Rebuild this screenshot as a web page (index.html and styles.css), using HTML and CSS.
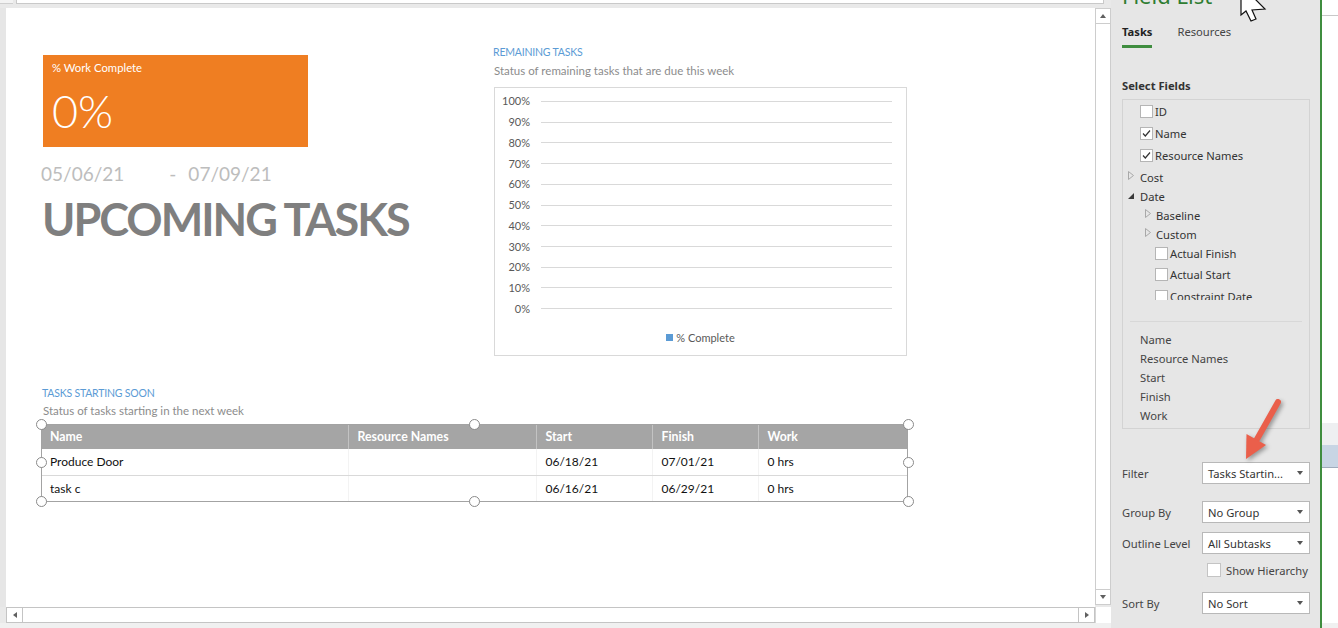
FILE: index.html
```html
<!DOCTYPE html>
<html>
<head>
<meta charset="utf-8">
<title>Upcoming Tasks</title>
<link rel="stylesheet" href="styles.css">
</head>
<body>
<div class="app">
  <div class="workspace">
    <div class="topstrip"><div class="tab-stub"></div><div class="formula"></div></div>
    <div class="mid">
      <div class="leftstrip"></div>
      <div class="canvas">
        <div class="report-top">
          <div class="left-col">
            <div class="kpi">
              <div class="kpi-label">% Work Complete</div>
              <div class="kpi-value">0%</div>
            </div>
            <div class="dates"><span>05/06/21</span><span class="dash">-</span><span class="date2">07/09/21</span></div>
            <h1 class="title">UPCOMING TASKS</h1>
          </div>
          <div class="right-col">
            <div class="sec-title">REMAINING TASKS</div>
            <div class="sec-sub">Status of remaining tasks that are due this week</div>
            <div class="chart">
              <div class="plot">
                <div class="grow"><span class="ylab">100%</span><span class="gline"></span></div>
                <div class="grow"><span class="ylab">90%</span><span class="gline"></span></div>
                <div class="grow"><span class="ylab">80%</span><span class="gline"></span></div>
                <div class="grow"><span class="ylab">70%</span><span class="gline"></span></div>
                <div class="grow"><span class="ylab">60%</span><span class="gline"></span></div>
                <div class="grow"><span class="ylab">50%</span><span class="gline"></span></div>
                <div class="grow"><span class="ylab">40%</span><span class="gline"></span></div>
                <div class="grow"><span class="ylab">30%</span><span class="gline"></span></div>
                <div class="grow"><span class="ylab">20%</span><span class="gline"></span></div>
                <div class="grow"><span class="ylab">10%</span><span class="gline"></span></div>
                <div class="grow"><span class="ylab">0%</span><span class="gline"></span></div>
              </div>
              <div class="legend"><span class="swatch"></span>% Complete</div>
            </div>
          </div>
        </div>
        <div class="report-bottom">
          <div class="sec-title t2">TASKS STARTING SOON</div>
          <div class="sec-sub s2">Status of tasks starting in the next week</div>
          <div class="table-wrap">
            <table class="tasks">
              <colgroup><col class="c1"><col class="c2"><col class="c3"><col class="c4"><col class="c5"></colgroup>
              <thead>
                <tr><th>Name</th><th>Resource Names</th><th>Start</th><th>Finish</th><th>Work</th></tr>
              </thead>
              <tbody>
                <tr><td>Produce Door</td><td></td><td>06/18/21</td><td>07/01/21</td><td>0 hrs</td></tr>
                <tr><td>task c</td><td></td><td>06/16/21</td><td>06/29/21</td><td>0 hrs</td></tr>
              </tbody>
            </table>
            <div class="frame"></div>
            <span class="handle h-tl"></span><span class="handle h-tc"></span><span class="handle h-tr"></span>
            <span class="handle h-ml"></span><span class="handle h-mr"></span>
            <span class="handle h-bl"></span><span class="handle h-bc"></span><span class="handle h-br"></span>
          </div>
        </div>
      </div>
      <div class="vscroll">
        <div class="sbtn up"><span class="tri tri-up"></span></div>
        <div class="strack"></div>
        <div class="sbtn down"><span class="tri tri-down"></span></div>
      </div>
    </div>
    <div class="hrow">
      <div class="hscroll">
        <div class="sbtn hleft"><span class="tri tri-left"></span></div>
        <div class="htrack"></div>
        <div class="sbtn hright"><span class="tri tri-right"></span></div>
      </div>
      <div class="corner"></div>
    </div>
    <div class="bottomgap"></div>
  </div>

  <aside class="panel">
    <div class="panel-title">Field List</div>
    <div class="tabs">
      <div class="tab active">Tasks</div>
      <div class="tab">Resources</div>
    </div>
    <div class="select-label">Select Fields</div>
    <div class="fieldbox">
      <div class="tree">
        <div class="row"><span class="cb l0"></span><span class="txt">ID</span></div>
        <div class="row"><span class="cb l0"><svg viewBox="0 0 11 11" width="11" height="11"><polyline points="2,5.5 4.3,8 9,2.5" fill="none" stroke="#333" stroke-width="1.2"/></svg></span><span class="txt">Name</span></div>
        <div class="row"><span class="cb l0"><svg viewBox="0 0 11 11" width="11" height="11"><polyline points="2,5.5 4.3,8 9,2.5" fill="none" stroke="#333" stroke-width="1.2"/></svg></span><span class="txt">Resource Names</span></div>
        <div class="row exp first-exp"><svg class="ex0" viewBox="0 0 6 9" width="6" height="9"><polygon points="0.5,0.5 5.5,4.5 0.5,8.5" fill="none" stroke="#a8a8a8" stroke-width="1"/></svg><span class="txt t-ex0">Cost</span></div>
        <div class="row exp"><svg class="ex0 open" viewBox="0 0 6 6" width="6" height="6"><polygon points="6,0 6,6 0,6" fill="#3a3a3a"/></svg><span class="txt t-ex0">Date</span></div>
        <div class="row exp"><svg class="ex1" viewBox="0 0 6 9" width="6" height="9"><polygon points="0.5,0.5 5.5,4.5 0.5,8.5" fill="none" stroke="#a8a8a8" stroke-width="1"/></svg><span class="txt t-ex1">Baseline</span></div>
        <div class="row exp"><svg class="ex1" viewBox="0 0 6 9" width="6" height="9"><polygon points="0.5,0.5 5.5,4.5 0.5,8.5" fill="none" stroke="#a8a8a8" stroke-width="1"/></svg><span class="txt t-ex1">Custom</span></div>
        <div class="row exp"><span class="cb l2"></span><span class="txt">Actual Finish</span></div>
        <div class="row"><span class="cb l2"></span><span class="txt">Actual Start</span></div>
        <div class="row"><span class="cb l2"></span><span class="txt">Constraint Date</span></div>
      </div>
      <div class="sep"></div>
      <div class="flist">
        <div>Name</div>
        <div>Resource Names</div>
        <div>Start</div>
        <div>Finish</div>
        <div>Work</div>
      </div>
    </div>
    <div class="form">
      <div class="frow"><span class="flabel">Filter</span><span class="dd">Tasks Startin...</span></div>
      <div class="frow group"><span class="flabel">Group By</span><span class="dd">No Group</span></div>
      <div class="frow outline"><span class="flabel">Outline Level</span><span class="dd">All Subtasks</span></div>
      <div class="crow"><span class="cb2"></span><span>Show Hierarchy</span></div>
      <div class="frow sort"><span class="flabel">Sort By</span><span class="dd">No Sort</span></div>
    </div>
  </aside>

  <div class="sliver">
    <div class="sl-top"></div>
    <div class="sl-fill"></div>
    <div class="sl-band1"></div>
    <div class="sl-band2"></div>
    <div class="sl-rest"></div>
    <div class="sl-bottom"></div>
  </div>

  <svg class="callout" width="50" height="72" viewBox="1234 394 50 72">
    <line x1="1278" y1="402" x2="1256" y2="441" stroke="#ea5f4b" stroke-width="6" stroke-linecap="round"/>
    <polygon points="1246,459 1246.5,434 1266,445" fill="#ea5f4b"/>
  </svg>

  <svg class="cursor" width="34" height="24" viewBox="0 0 34 24">
    <polygon points="5,-2 5,15 10,11 15,21 20,19 16,10 29,9 18,-2" fill="#fff" stroke="#111" stroke-width="1.2" stroke-linejoin="miter"/>
  </svg>
</div>
</body>
</html>
```

FILE: styles.css
```css
* { box-sizing: border-box; }

body {
  margin: 0;
  width: 1338px;
  height: 628px;
  overflow: hidden;
  background: #f0f0f0;
  font-family: Lato, "Liberation Sans", sans-serif;
}

.app {
  position: relative;
  display: flex;
  width: 1338px;
  height: 628px;
}

/* ---------- workspace ---------- */
.workspace {
  width: 1111px;
  display: flex;
  flex-direction: column;
  background: #e9e9e9;
}

.topstrip {
  height: 8px;
  display: flex;
  gap: 3px;
}
.tab-stub {
  width: 13px;
  height: 4px;
  background: #f3f3f3;
  border-bottom: 1px solid #cfcfcf;
}
.formula {
  width: 1088px;
  height: 4px;
  background: #fff;
  border: 1px solid #c9c9c9;
  border-top: 0;
}

.mid {
  display: flex;
  height: 599px;
}
.leftstrip {
  width: 6px;
  background: #e6e6e6;
}
.canvas {
  width: 1089px;
  background: #fff;
  overflow: hidden;
}

.vscroll {
  width: 16px;
  height: 597px;
  display: flex;
  flex-direction: column;
  background: #fff;
  border-left: 1px solid #cdcdcd;
  border-right: 1px solid #cdcdcd;
}
.sbtn {
  display: flex;
  align-items: center;
  justify-content: center;
  background: #fff;
}
.vscroll .sbtn { height: 16px; }
.vscroll .up { border-top: 1px solid #cdcdcd; border-bottom: 1px solid #cdcdcd; }
.vscroll .down { border-top: 1px solid #cdcdcd; border-bottom: 1px solid #cdcdcd; }
.strack { flex: 1; }

.tri { width: 0; height: 0; display: block; }
.tri-up { border-left: 3.5px solid transparent; border-right: 3.5px solid transparent; border-bottom: 4px solid #606060; }
.tri-down { border-left: 3.5px solid transparent; border-right: 3.5px solid transparent; border-top: 4px solid #606060; }
.tri-left { border-top: 3.5px solid transparent; border-bottom: 3.5px solid transparent; border-right: 4px solid #606060; }
.tri-right { border-top: 3.5px solid transparent; border-bottom: 3.5px solid transparent; border-left: 4px solid #606060; }

.hrow {
  height: 16px;
  display: flex;
}
.hscroll {
  margin-left: 6px;
  width: 1089px;
  display: flex;
  background: #fff;
  border: 1px solid #c4c4c4;
}
.hscroll .sbtn { width: 16px; }
.hleft { border-right: 1px solid #c4c4c4; }
.hright { border-left: 1px solid #c4c4c4; }
.htrack { flex: 1; }
.corner {
  width: 16px;
  background: #fff;
  border-left: 1px solid #d6d6d6;
}
.bottomgap {
  flex: 1;
  background: #f0f0f0;
}

/* ---------- report ---------- */
.report-top {
  display: flex;
  padding-left: 35px;
  height: 348px;
}
.left-col {
  width: 452px;
  padding-top: 47px;
}
.kpi {
  margin-left: 2px;
  width: 265px;
  height: 92px;
  background: #ef7e22;
  color: #fff;
  padding: 6px 9px;
}
.kpi-label {
  font-size: 11.3px;
  line-height: 14px;
}
.kpi-value {
  margin-top: 14px;
  font-size: 45px;
  line-height: 45px;
  font-weight: 300;
}
.dates {
  margin-top: 15px;
  display: flex;
  font-size: 19px;
  line-height: 24px;
  color: #bdbdbd;
}
.dash { margin-left: 45px; }
.date2 { margin-left: 12px; }
.title {
  margin: 8px 0 0 1px;
  font-size: 45px;
  line-height: 50px;
  font-weight: 700;
  color: #7f7f7f;
  letter-spacing: -2px;
}

.right-col {
  padding-top: 37px;
}
.sec-title {
  font-size: 10.5px;
  line-height: 14px;
  color: #5b9bd5;
  letter-spacing: -0.2px;
}
.sec-sub {
  margin-top: 5px;
  padding-left: 1px;
  font-size: 11.5px;
  line-height: 14px;
  color: #8c8c8c;
}
.chart {
  margin-top: 9px;
  margin-left: 1px;
  width: 413px;
  height: 269px;
  border: 1px solid #d9d9d9;
  padding-top: 3px;
}
.plot {
  height: 228px;
  display: flex;
  flex-direction: column;
}
.grow {
  flex: 1;
  display: flex;
  align-items: center;
}
.ylab {
  width: 35px;
  text-align: right;
  font-size: 11px;
  line-height: 12px;
  color: #595959;
}
.gline {
  margin-left: 11px;
  width: 351px;
  height: 1px;
  background: #d9d9d9;
}
.legend {
  margin-top: 11px;
  height: 14px;
  display: flex;
  align-items: center;
  justify-content: center;
  font-size: 11px;
  color: #595959;
}
.swatch {
  width: 7px;
  height: 7px;
  background: #5b9bd5;
  margin-right: 3px;
}

.report-bottom {
  padding: 30px 0 0 35px;
}
.t2 { padding-left: 1px; }
.s2 { margin-top: 4px; padding-left: 2px; }
.table-wrap {
  position: relative;
  margin-top: 6px;
  width: 867px;
}
.tasks {
  width: 867px;
  border-collapse: collapse;
  table-layout: fixed;
  font-size: 12px;
}
.c1 { width: 307px; }
.c2 { width: 188px; }
.c3 { width: 116px; }
.c4 { width: 106px; }
.c5 { width: 150px; }
.tasks th {
  height: 25px;
  padding: 0 0 0 9px;
  background: #a5a5a5;
  color: #fff;
  font-weight: 700;
  font-size: 12.3px;
  text-align: left;
  border-left: 1px solid #c3c3c3;
}
.tasks th:first-child { border-left: 0; }
.tasks td {
  height: 26px;
  padding: 0 0 0 9px;
  color: #111;
  border-left: 1px solid #f3f3f3;
  border-bottom: 1px solid #d9d9d9;
}
.tasks td:first-child { border-left: 0; }
.tasks tbody tr:last-child td { border-bottom: 1px solid #a8a8a8; }

.frame {
  position: absolute;
  inset: 0;
  border: 1px solid #a3a3a3;
  pointer-events: none;
}
.handle {
  position: absolute;
  width: 11px;
  height: 11px;
  margin: -5.5px 0 0 -5.5px;
  border-radius: 50%;
  background: #fff;
  border: 1px solid #8a8a8a;
}
.h-tl { left: 0; top: 0; }
.h-tc { left: 50%; top: 0; }
.h-tr { left: 100%; top: 0; }
.h-ml { left: 0; top: 50%; }
.h-mr { left: 100%; top: 50%; }
.h-bl { left: 0; top: 100%; }
.h-bc { left: 50%; top: 100%; }
.h-br { left: 100%; top: 100%; }

/* ---------- field list panel ---------- */
.panel {
  width: 211px;
  background: #e6e6e6;
  border-right: 2px solid #3f8d3f;
  padding: 0 10px 0 11px;
  font-family: "Noto Sans", "Open Sans", sans-serif;
  font-size: 11.2px;
  color: #333;
  overflow: hidden;
  display: flex;
  flex-direction: column;
  white-space: nowrap;
}
.panel-title {
  margin-top: -16px;
  height: 22px;
  font-size: 22px;
  line-height: 22px;
  color: #2f7d32;
}
.tabs {
  margin-top: 18px;
  display: flex;
}
.tab {
  line-height: 16px;
  padding-bottom: 5px;
  color: #444;
}
.tab.active {
  font-weight: 700;
  color: #222;
  border-bottom: 3px solid #3f8d3f;
}
.tab + .tab { margin-left: 25px; padding-bottom: 8px; }
.select-label {
  margin-top: 30px;
  line-height: 16px;
  font-weight: 700;
  color: #333;
}
.fieldbox {
  margin-top: 5px;
  height: 330px;
  border: 1px solid #d3d3d3;
}
.tree {
  height: 200px;
  margin-bottom: 1px;
  overflow: hidden;
}
.row {
  display: flex;
  align-items: center;
  height: 22px;
}
.row.exp { height: 19px; }
.row.first-exp { margin-top: 2px; }
.cb {
  width: 13px;
  height: 13px;
  background: #fff;
  border: 1px solid #b5b5b5;
  display: flex;
  align-items: center;
  justify-content: center;
  flex: none;
}
.cb.l0 { margin-left: 17px; }
.cb.l2 { margin-left: 32px; }
.cb + .txt { margin-left: 2px; }
.ex0 { margin-left: 5px; margin-bottom: 4px; flex: none; }
.ex0.open { margin-bottom: 2px; }
.ex1 { margin-left: 22px; margin-bottom: 4px; flex: none; }
.t-ex0 { margin-left: 6px; }
.t-ex1 { margin-left: 5px; }
.sep {
  margin: 21px 7px 0 7px;
  height: 1px;
  background: #d8d8d8;
}
.flist {
  padding: 8px 0 0 17px;
  line-height: 19px;
  color: #444;
}

.form {
  margin-top: 33px;
  display: flex;
  flex-direction: column;
}
.frow {
  display: flex;
  align-items: center;
  height: 22px;
}
.frow.group { margin-top: 17px; }
.frow.outline { margin-top: 9px; }
.frow.sort { margin-top: 14px; }
.flabel {
  width: 80px;
  color: #444;
}
.dd {
  width: 108px;
  height: 22px;
  background: #fff;
  border: 1px solid #b8b8b8;
  padding: 0 6px 0 5px;
  display: flex;
  align-items: center;
  justify-content: space-between;
  color: #333;
}
.dd::after {
  content: "";
  width: 0;
  height: 0;
  border-left: 3.5px solid transparent;
  border-right: 3.5px solid transparent;
  border-top: 4px solid #555;
}
.crow {
  margin-top: 8px;
  height: 16px;
  display: flex;
  align-items: center;
  color: #444;
}
.cb2 {
  flex: none;
  margin-left: 85px;
  margin-right: 5px;
  width: 14px;
  height: 14px;
  background: #fff;
  border: 1px solid #c4c4c4;
}

/* ---------- right sliver ---------- */
.sliver {
  width: 16px;
  display: flex;
  flex-direction: column;
  background: #fff;
}
.sl-top {
  height: 16px;
  border-bottom: 1px solid #c8c8c8;
}
.sl-fill { height: 407px; }
.sl-band1 { height: 22px; background: #eeeff1; }
.sl-band2 { height: 23px; background: #c8d5e4; border-bottom: 1px solid #9fabbb; }
.sl-rest { flex: 1; }
.sl-bottom { height: 5px; background: #f0f0f0; }

/* ---------- overlays ---------- */
.callout {
  position: absolute;
  left: 1234px;
  top: 394px;
  filter: drop-shadow(2px 2px 2px rgba(0, 0, 0, 0.35));
}
.cursor {
  position: absolute;
  left: 1236px;
  top: 0;
}
```
